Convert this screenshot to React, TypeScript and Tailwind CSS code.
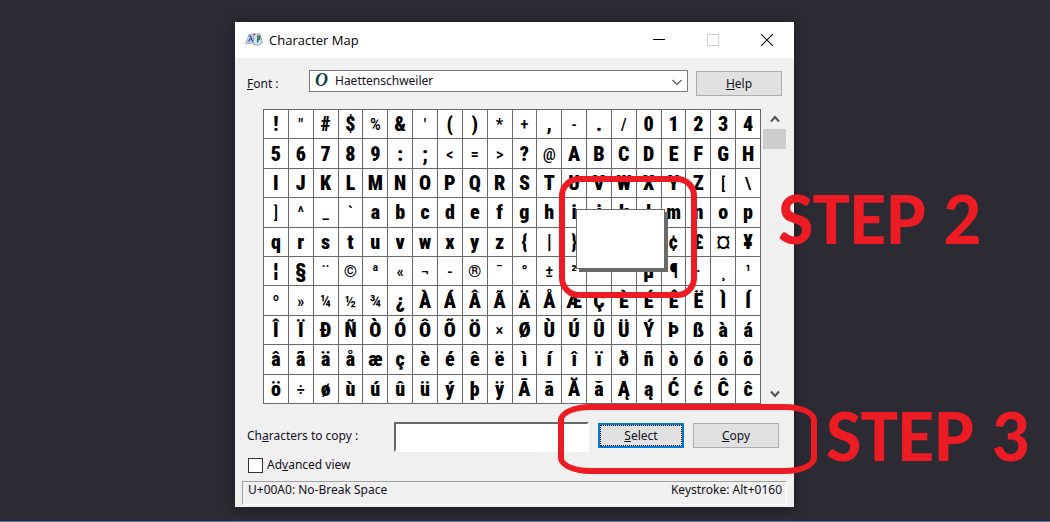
import React, { useState } from 'react';

const ROWS = [
  '!"#$%&\'()*+,-./01234',
  '56789:;<=>?@ABCDEFGH',
  'IJKLMNOPQRSTUVWXYZ[\\',
  ']^_`abcdefghijklmnop',
  'qrstuvwxyz{|}~\u00a0¡¢£¤¥',
  '¦§¨©ª«¬-®¯°±²³´µ¶·¸¹',
  'º»¼½¾¿ÀÁÂÃÄÅÆÇÈÉÊËÌÍ',
  'ÎÏÐÑÒÓÔÕÖ×ØÙÚÛÜÝÞßàá',
  'âãäåæçèéêëìíîïðñòóôõ',
  'ö÷øùúûüýþÿĀāĂăĄąĆćĈĉ',
];

// light glyphs of the face
const THIN = '%*+-/<=>@[]\\^_`"\'¨©ª«¬®¯°±²³´·¸¹º»¼½¾×÷';

const AppIcon: React.FC = () => (
  <svg width="18" height="14" viewBox="0 0 18 14" aria-hidden="true">
    <path d="M4 1.5 L10 .5 L8.5 10 L.5 11 Z" fill="#c3cde0" stroke="#9aa8c4" strokeWidth="0.8" />
    <path d="M9 1.5 L14.5 .5 L17.5 10 L13 12.5 L8 11 Z" fill="#d5deee" stroke="#8496b8" strokeWidth="0.8" />
    <path d="M4 3 L5.5 3 L7.5 8.5 M5.5 5.5 L3.5 8.5" fill="none" stroke="#24449a" strokeWidth="1.2" />
    <path d="M8 1.5 L10.5 1.5" stroke="#c85050" strokeWidth="1.2" />
    <path d="M12.5 9.5 L13 3 L15 3.5 L14.5 6.5 H13" fill="none" stroke="#2c7a4c" strokeWidth="1.5" />
  </svg>
);

const TitleBar: React.FC = () => (
  <header className="flex h-9 items-center bg-white pl-2.5 font-['Open_Sans','Noto_Sans',sans-serif]">
    <AppIcon />
    <h1 className="ml-1.5 flex-1 text-[13px] text-black">Character Map</h1>
    <button aria-label="Minimize" className="flex h-full w-[54px] items-center justify-center">
      <svg width="12" height="12" viewBox="0 0 12 12"><path d="M0 5.5 H12" stroke="#000" /></svg>
    </button>
    <button aria-label="Maximize" disabled className="flex h-full w-[54px] items-center justify-center">
      <svg width="12" height="12" viewBox="0 0 12 12"><path d="M.5 .5 H11.5 V11.5 H.5 Z" fill="none" stroke="#ccc" /></svg>
    </button>
    <button aria-label="Close" className="flex h-full w-[54px] items-center justify-center">
      <svg width="12" height="12" viewBox="0 0 12 12"><path d="M0 0 L12 12 M12 0 L0 12" stroke="#111" strokeWidth="1.2" /></svg>
    </button>
  </header>
);

const BUTTON = 'h-[25px] w-[86px] shrink-0 border bg-[#e1e1e1]';

export default function App() {
  const [text, setText] = useState('');
  const [advanced, setAdvanced] = useState(false);
  const [picked, setPicked] = useState('\u00a0');

  return (
    <div className="flex min-h-screen flex-col overflow-hidden border-b border-[#4a6fa8] bg-[#2c2a33] pt-[22px] pr-[256px] pl-[235px] font-['Noto_Sans',sans-serif] text-[12px] leading-4 text-[#101020]">
      <main className="relative bg-[#f0f0f0] shadow-[0_2px_12px_rgba(0,0,0,0.4)]">
        <TitleBar />

        <div className="flex items-start pt-3 pr-3 pl-3">
          <label htmlFor="font" className="mt-1.5 w-[62px] shrink-0"><u>F</u>ont :</label>
          <div className="relative flex-1">
            <select id="font" className="block h-[22px] w-full appearance-none border border-[#7a7a7a] bg-white pl-[25px] text-[12px] leading-4 outline-none">
              <option>Haettenschweiler</option>
            </select>
            <span className="pointer-events-none absolute top-0 left-1.5 font-['Liberation_Serif',serif] text-[18px] leading-5 font-bold text-[#12403f] italic">O</span>
            <svg className="pointer-events-none absolute top-[9px] right-1.5" width="10" height="7" viewBox="0 0 10 7"><path d="M.5 1 L5 5.5 L9.5 1" fill="none" stroke="#555" strokeWidth="1.2" /></svg>
          </div>
          <button className={`${BUTTON} mt-px ml-2 border-[#adadad]`}><u>H</u>elp</button>
        </div>

        <div className="mt-[13px] flex pr-2 pl-7">
          <div className="grid h-[295px] flex-1 grid-cols-20 grid-rows-10 gap-px border border-[#696969] bg-[#696969] font-['Liberation_Sans_Narrow','Roboto_Condensed','Liberation_Sans',sans-serif] text-[20px] leading-5 text-black">
            {ROWS.flatMap((row, r) =>
              Array.from(row).map((ch, c) => (
                <button key={`${r}-${c}`} onClick={() => setPicked(ch)} className={`flex min-h-0 min-w-0 items-center justify-center overflow-hidden bg-white ${THIN.includes(ch) ? 'text-[17px] font-medium' : 'font-black'}`}>{ch}</button>
              )),
            )}
          </div>
          <div className="ml-0.5 flex w-[23px] flex-col items-center">
            <button aria-label="Scroll up" className="flex h-5 w-full items-center justify-center">
              <svg width="10" height="8" viewBox="0 0 10 8"><path d="M1 6.5 L5 2 L9 6.5" fill="none" stroke="#505050" strokeWidth="2" /></svg>
            </button>
            <div className="h-5 w-full bg-[#cdcdcd]" />
            <button aria-label="Scroll down" className="mt-auto flex h-5 w-full items-center justify-center">
              <svg width="10" height="8" viewBox="0 0 10 8"><path d="M1 1.5 L5 6 L9 1.5" fill="none" stroke="#505050" strokeWidth="2" /></svg>
            </button>
          </div>
        </div>

        <div className="mt-[18px] flex items-start pr-[15px] pl-3">
          <label htmlFor="copy" className="mt-1.5 w-[147px] shrink-0">Ch<u>a</u>racters to copy :</label>
          <input id="copy" value={text} onChange={e => setText(e.target.value)} className="h-[30px] min-w-0 flex-1 border-2 border-t-[#696969] border-r-white border-b-white border-l-[#696969] bg-white px-1 outline-none" />
          <button onClick={() => setText(text + picked)} className={`${BUTTON} mt-px ml-[9px] border-2 border-[#0078d7] outline-1 -outline-offset-3 outline-black outline-dotted`}><u>S</u>elect</button>
          <button className={`${BUTTON} mt-px ml-[9px] border-[#adadad]`}><u>C</u>opy</button>
        </div>

        <div className="mt-[5px] flex items-center pl-[13px]">
          <input id="advanced" type="checkbox" checked={advanced} onChange={e => setAdvanced(e.target.checked)} className="size-[15px] appearance-none border border-[#333] bg-white checked:bg-[#0078d7]" />
          <label htmlFor="advanced" className="ml-1">Ad<u>v</u>anced view</label>
        </div>

        <div className="px-[7px] pt-2 pb-0.5">
          <footer className="flex h-6 justify-between border border-t-[#a0a0a0] border-r-white border-b-white border-l-[#a0a0a0] pr-1 pl-[5px]">
            <span>U+00A0: No-Break Space</span>
            <span>Keystroke: Alt+0160</span>
          </footer>
        </div>

        <div className="absolute top-[187px] left-[341px] h-[60px] w-[89px] border border-[#696969] bg-white shadow-[3px_3px_0_#696969]" />
        <div className="absolute top-[154px] left-[324px] h-[122px] w-[138px] rounded-[20px] border-6 border-[#ed1c24]" />
        <div className="absolute top-[382px] left-[323px] h-[70px] w-[259px] rounded-[32px/16px] border-6 border-[#ed1c24]" />
        <p className="absolute top-[161px] left-[543px] font-['Carlito','Lato',sans-serif] text-[75px] leading-[72px] font-bold whitespace-nowrap text-[#ed1c24]">STEP 2</p>
        <p className="absolute top-[378px] left-[591px] font-['Carlito','Lato',sans-serif] text-[75px] leading-[72px] font-bold whitespace-nowrap text-[#ed1c24]">STEP 3</p>
      </main>
    </div>
  );
}
